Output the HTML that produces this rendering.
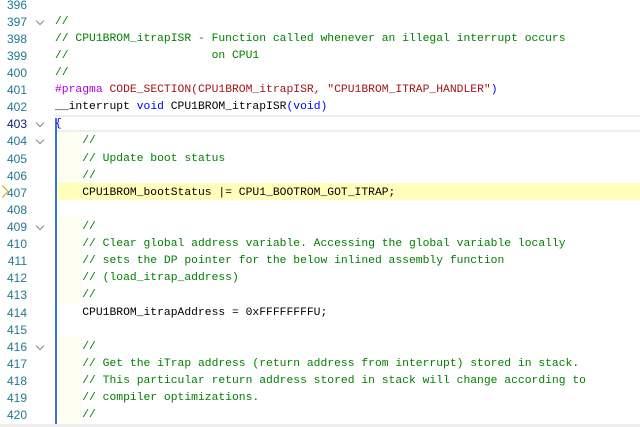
<!DOCTYPE html>
<html><head><style>
body{margin:0;width:640px;height:427px;overflow:hidden;background:#fff;position:relative;font-family:"Liberation Mono",monospace;font-size:11.35px;}
.l{position:absolute;left:0;width:640px;height:17px;line-height:17px;white-space:pre;margin-top:2px;}
.n{position:absolute;right:613px;color:#237893;font-family:"Liberation Sans",sans-serif;font-size:12px;}
.c{position:absolute;left:55px;color:#000;}
.f{position:absolute;left:37px;top:4px;width:5px;height:5px;border-right:1.2px solid #888;border-bottom:1.2px solid #888;transform:rotate(45deg);}
.g{color:#008000}.p{color:#af00db}.r{color:#a31515}.b{color:#0000ff}
.cr{position:absolute;left:56px;width:26px;height:17px;background:#fdfdf0;}
</style></head><body>
<div style="position:absolute;left:55px;right:0;top:115px;height:13px;border-top:2px solid #eee;border-bottom:2px solid #eee"></div>
<div style="position:absolute;left:55px;right:0;top:183px;height:17px;background:#ffffbb"></div>
<div style="position:absolute;left:0;right:0;top:424px;height:3px;background:#eee"></div>
<div class="cr" style="top:132px;height:51px"></div>
<div class="cr" style="top:217px;height:86px"></div>
<div class="cr" style="top:337px;height:86px"></div>
<div style="position:absolute;left:55px;top:118px;width:1.5px;height:306px;background:#3b6fe0"></div>

<div class="l" style="top:-5px"><span class="n">396</span></div>
<div class="l" style="top:12px"><span class="n">397</span><i class="f"></i><span class="c g">//</span></div>
<div class="l" style="top:29px"><span class="n">398</span><span class="c g">// CPU1BROM_itrapISR - Function called whenever an illegal interrupt occurs</span></div>
<div class="l" style="top:46px"><span class="n">399</span><span class="c g">//                     on CPU1</span></div>
<div class="l" style="top:63px"><span class="n">400</span><span class="c g">//</span></div>
<div class="l" style="top:80px"><span class="n">401</span><span class="c"><span class="p">#pragma</span> <span class="r">CODE_SECTION(CPU1BROM_itrapISR, "CPU1BROM_ITRAP_HANDLER"</span><span class="b">)</span></span></div>
<div class="l" style="top:97px"><span class="n">402</span><span class="c">__interrupt <span class="b">void</span> CPU1BROM_itrapISR<span class="b">(void)</span></span></div>
<div class="l" style="top:114px"><span class="n" style="color:#0b216f">403</span><i class="f"></i><span class="c b">{</span></div>
<div class="l" style="top:131px"><span class="n">404</span><i class="f"></i><span class="c g">    //</span></div>
<div class="l" style="top:149px"><span class="n">405</span><span class="c g">    // Update boot status</span></div>
<div class="l" style="top:166px"><span class="n">406</span><span class="c g">    //</span></div>
<div class="l" style="top:183px"><span style="position:absolute;left:-2px;top:2px;width:8px;height:8px;border-top:1.5px solid #d9a000;border-right:1.5px solid #d9a000;transform:rotate(45deg);"></span><span class="n">407</span><span class="c">    CPU1BROM_bootStatus |= CPU1_BOOTROM_GOT_ITRAP;</span></div>
<div class="l" style="top:200px"><span class="n">408</span></div>
<div class="l" style="top:217px"><span class="n">409</span><i class="f"></i><span class="c g">    //</span></div>
<div class="l" style="top:234px"><span class="n">410</span><span class="c g">    // Clear global address variable. Accessing the global variable locally</span></div>
<div class="l" style="top:251px"><span class="n">411</span><span class="c g">    // sets the DP pointer for the below inlined assembly function</span></div>
<div class="l" style="top:268px"><span class="n">412</span><span class="c g">    // (load_itrap_address)</span></div>
<div class="l" style="top:285px"><span class="n">413</span><span class="c g">    //</span></div>
<div class="l" style="top:303px"><span class="n">414</span><span class="c">    CPU1BROM_itrapAddress = 0xFFFFFFFFU;</span></div>
<div class="l" style="top:320px"><span class="n">415</span></div>
<div class="l" style="top:337px"><span class="n">416</span><i class="f"></i><span class="c g">    //</span></div>
<div class="l" style="top:354px"><span class="n">417</span><span class="c g">    // Get the iTrap address (return address from interrupt) stored in stack.</span></div>
<div class="l" style="top:371px"><span class="n">418</span><span class="c g">    // This particular return address stored in stack will change according to</span></div>
<div class="l" style="top:388px"><span class="n">419</span><span class="c g">    // compiler optimizations.</span></div>
<div class="l" style="top:405px"><span class="n">420</span><span class="c g">    //</span></div>
</body></html>
